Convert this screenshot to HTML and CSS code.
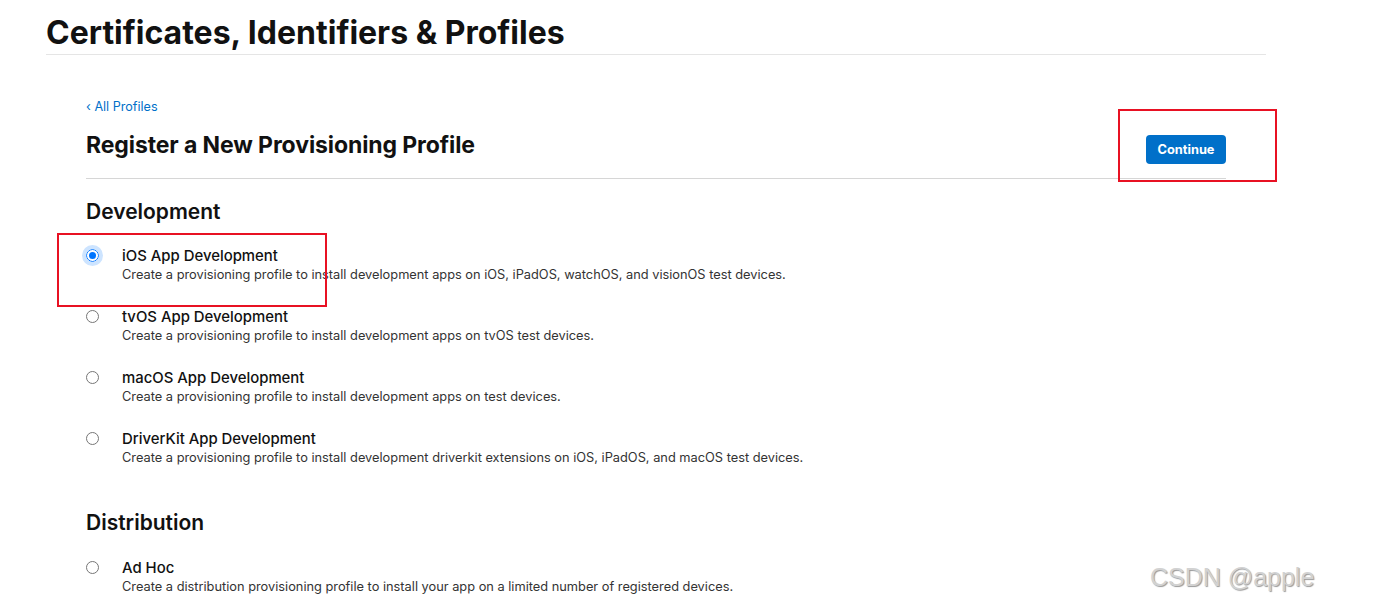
FILE: index.html
```html
<!DOCTYPE html>
<html lang="en">
<head>
    <meta charset="UTF-8">
    <title>Certificates, Identifiers &amp; Profiles</title>
    <link rel="stylesheet" href="styles.css">
</head>
<body>
    <div class="page">
        <!--页面标题-->
        <h1 class="page-title">Certificates, Identifiers &amp; Profiles</h1>

        <div class="content">
            <a class="back-link" href="#">&lsaquo; All Profiles</a>

            <div class="head-row">
                <h2 class="form-title">Register a New Provisioning Profile</h2>
                <button class="continue-btn">Continue</button>
            </div>

            <!--开发-->
            <h3 class="group-title">Development</h3>
            <ul class="option-list">
                <li class="option">
                    <span class="radio checked"></span>
                    <div class="option-text">
                        <div class="option-name">iOS App Development</div>
                        <div class="option-desc">Create a provisioning profile to install development apps on iOS, iPadOS, watchOS, and visionOS test devices.</div>
                    </div>
                </li>
                <li class="option">
                    <span class="radio"></span>
                    <div class="option-text">
                        <div class="option-name">tvOS App Development</div>
                        <div class="option-desc">Create a provisioning profile to install development apps on tvOS test devices.</div>
                    </div>
                </li>
                <li class="option">
                    <span class="radio"></span>
                    <div class="option-text">
                        <div class="option-name">macOS App Development</div>
                        <div class="option-desc">Create a provisioning profile to install development apps on test devices.</div>
                    </div>
                </li>
                <li class="option">
                    <span class="radio"></span>
                    <div class="option-text">
                        <div class="option-name">DriverKit App Development</div>
                        <div class="option-desc">Create a provisioning profile to install development driverkit extensions on iOS, iPadOS, and macOS test devices.</div>
                    </div>
                </li>
            </ul>

            <!--发布-->
            <h3 class="group-title dist">Distribution</h3>
            <ul class="option-list dist-list">
                <li class="option">
                    <span class="radio"></span>
                    <div class="option-text">
                        <div class="option-name">Ad Hoc</div>
                        <div class="option-desc">Create a distribution provisioning profile to install your app on a limited number of registered devices.</div>
                    </div>
                </li>
            </ul>
        </div>
    </div>

    <!--标注框-->
    <div class="mark mark-btn"></div>
    <div class="mark mark-ios"></div>

    <div class="watermark">CSDN @apple</div>
</body>
</html>
```

FILE: styles.css
```css
* {
    margin: 0;
    padding: 0;
    box-sizing: border-box;
}
ul,ol {
    list-style: none;
}
body {
    font-family: Inter, "Liberation Sans", sans-serif;
    color: #1d1d1f;
    background: #fff;
    width: 1379px;
    height: 601px;
    overflow: hidden;
    position: relative;
}
.page {
    padding: 12px 0 0 46px;
    width: 1266px;
}
.page-title {
    font-size: 32px;
    font-weight: 700;
    line-height: 42px;
    color: #111;
    border-bottom: 1px solid #e5e5e5;
}
.content {
    padding: 44px 0 0 40px;
    width: 1180px;
}
.back-link {
    display: block;
    font-size: 12.6px;
    line-height: 16px;
    color: #0070c9;
    text-decoration: none;
}
.head-row {
    display: flex;
    align-items: center;
    justify-content: space-between;
    border-bottom: 1px solid #d6d6d6;
    height: 64px;
    padding-bottom: 4px;
}
.form-title {
    font-size: 23px;
    font-weight: 700;
    color: #111;
    letter-spacing: -0.1px;
    margin-top: 1px;
}
.continue-btn {
    font-family: Inter, "Liberation Sans", sans-serif;
    font-size: 12.8px;
    font-weight: 700;
    color: #fff;
    background: #0070c9;
    border: none;
    border-radius: 4px;
    width: 80px;
    height: 29px;
    margin-top: 10px;
}
.group-title {
    font-size: 21px;
    font-weight: 600;
    color: #111;
    margin-top: 20px;
    line-height: 26px;
}
.group-title.dist {
    margin-top: 21px;
}
.option-list {
    margin-top: 20px;
}
.option-list.dist-list {
    margin-top: 21px;
}
.option {
    display: flex;
    height: 61px;
}
.option-text {
    padding-top: 2px;
}
.radio {
    width: 13px;
    height: 13px;
    border: 1px solid #767676;
    border-radius: 50%;
    margin-top: 4px;
    margin-right: 23px;
    flex-shrink: 0;
    position: relative;
}
.radio.checked {
    border-color: #0075ff;
    outline: 4px solid #cde4ff;
}
.radio.checked::after {
    content: '';
    position: absolute;
    left: 2px;
    top: 2px;
    width: 7px;
    height: 7px;
    border-radius: 50%;
    background: #0075ff;
}
.option-name {
    font-size: 14.9px;
    font-weight: 500;
    line-height: 19px;
    color: #111;
}
.option-desc {
    font-size: 12.8px;
    line-height: 18px;
    color: #333;
}
.mark {
    position: absolute;
    border: 2px solid #e81123;
}
.mark-btn {
    left: 1118px;
    top: 109px;
    width: 159px;
    height: 73px;
}
.mark-ios {
    left: 57px;
    top: 233px;
    width: 270px;
    height: 74px;
}
.watermark {
    position: absolute;
    left: 1150px;
    top: 563px;
    font-family: "Liberation Sans", Arial, sans-serif;
    font-size: 25px;
    color: #d2d2d2;
    text-shadow: 1px 1px 1px #999;
}
```
